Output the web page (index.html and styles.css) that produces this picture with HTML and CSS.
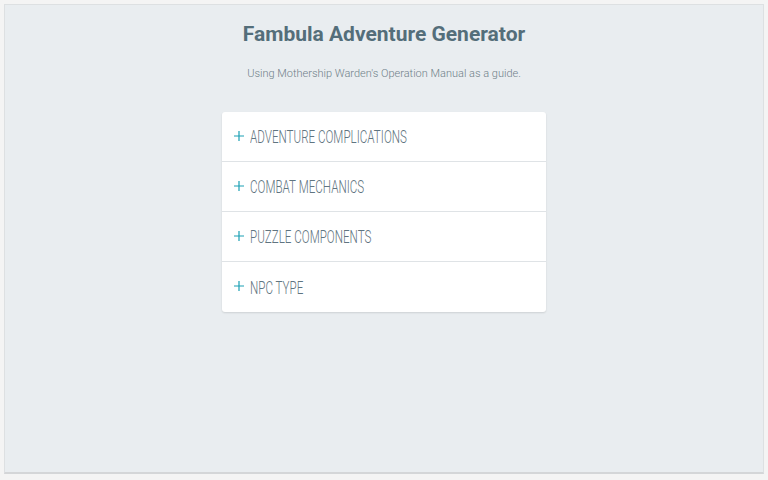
FILE: index.html
```html
<!DOCTYPE html>
<html lang="en">
<head>
    <meta charset="UTF-8">
    <meta name="viewport" content="width=device-width, initial-scale=1.0">
    <title>Fambula Adventure Generator</title>
    <link rel="stylesheet" href="styles.css">
</head>
<body>
    <div class="page">
        <h1>Fambula Adventure Generator</h1>
        <p class="subtitle">Using Mothership Warden's Operation Manual as a guide.</p>
        <div class="accordion">
            <div class="item">
                <svg class="plus" width="10" height="10" viewBox="0 0 10 10"><path d="M5 0v10M0 5h10"/></svg>
                <span class="label">ADVENTURE COMPLICATIONS</span>
            </div>
            <div class="item">
                <svg class="plus" width="10" height="10" viewBox="0 0 10 10"><path d="M5 0v10M0 5h10"/></svg>
                <span class="label">COMBAT MECHANICS</span>
            </div>
            <div class="item">
                <svg class="plus" width="10" height="10" viewBox="0 0 10 10"><path d="M5 0v10M0 5h10"/></svg>
                <span class="label">PUZZLE COMPONENTS</span>
            </div>
            <div class="item">
                <svg class="plus" width="10" height="10" viewBox="0 0 10 10"><path d="M5 0v10M0 5h10"/></svg>
                <span class="label">NPC TYPE</span>
            </div>
        </div>
    </div>
</body>
</html>
```

FILE: styles.css
```css
html, body {
    margin: 0;
    padding: 0;
    height: 100%;
}
body {
    background: #f4f4f4;
    padding: 4px;
    box-sizing: border-box;
    font-family: Roboto, Arial, sans-serif;
}
.page {
    background: #e9edf0;
    height: 470px;
    border: 1px solid #dde0e2;
    border-bottom: 2px solid #d4d6d8;
    box-sizing: border-box;
    display: flex;
    flex-direction: column;
    align-items: center;
}
h1 {
    margin: 16px 0 0;
    font-size: 21px;
    font-weight: 700;
    color: #546e7a;
    line-height: 26px;
}
.subtitle {
    margin: 20px 0 0;
    font-size: 11px;
    font-weight: 300;
    color: #6f7f88;
    line-height: 14px;
}
.accordion {
    margin-top: 31px;
    width: 324px;
    background: white;
    border-radius: 3px;
    box-shadow: 0 1px 2px rgba(0, 0, 0, 0.12);
}
.item {
    height: 50px;
    display: flex;
    align-items: center;
    padding-left: 12px;
    border-bottom: 1px solid #dfe3e6;
    box-sizing: border-box;
}
.item:last-child {
    border-bottom: none;
}
.plus {
    stroke: #1aa0b4;
    stroke-width: 1.2;
    fill: none;
    margin-right: 6px;
    margin-top: -2px;
}
.label {
    display: inline-block;
    font-size: 18px;
    font-weight: 300;
    color: #5f7480;
    transform: scaleX(0.645);
    transform-origin: left center;
    white-space: nowrap;
}
```
